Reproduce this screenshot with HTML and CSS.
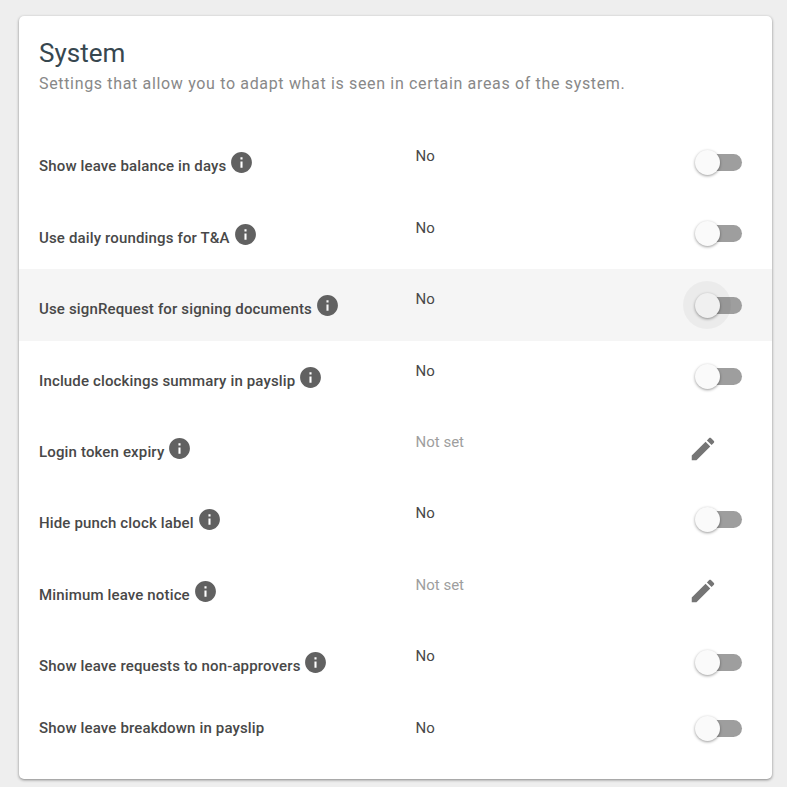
FILE: index.html
```html
<!DOCTYPE html>
<html>
  <head>
    <meta charset="utf-8">
    <title>System settings</title>
    <link rel="stylesheet" href="styles.css">
  </head>
  <body>
    <svg class="sprites" width="0" height="0">
      <symbol id="info" viewBox="0 0 24 24">
        <path d="M12 2C6.48 2 2 6.48 2 12s4.48 10 10 10 10-4.48 10-10S17.52 2 12 2zm1 15h-2v-6h2v6zm0-8h-2V7h2v2z"/>
      </symbol>
      <symbol id="pencil" viewBox="0 0 24 24">
        <path d="M3 17.25V21h3.75L17.81 9.94l-3.75-3.75L3 17.25zM20.71 7.04c.39-.39.39-1.02 0-1.41l-2.34-2.34c-.39-.39-1.02-.39-1.41 0l-1.83 1.83 3.75 3.75 1.83-1.83z"/>
      </symbol>
    </svg>

    <main class="card">
      <h1>System</h1>
      <p class="subtitle">Settings that allow you to adapt what is seen in certain areas of the system.</p>

      <div class="rows">
        <div class="row">
          <div class="label">Show leave balance in days <svg class="info"><use href="#info"/></svg></div>
          <div class="value">No</div>
          <div class="action"><span class="switch"></span></div>
        </div>
        <div class="row">
          <div class="label">Use daily roundings for T&amp;A <svg class="info"><use href="#info"/></svg></div>
          <div class="value">No</div>
          <div class="action"><span class="switch"></span></div>
        </div>
        <div class="row hover">
          <div class="label">Use signRequest for signing documents <svg class="info"><use href="#info"/></svg></div>
          <div class="value">No</div>
          <div class="action"><span class="switch focused"></span></div>
        </div>
        <div class="row">
          <div class="label">Include clockings summary in payslip <svg class="info"><use href="#info"/></svg></div>
          <div class="value">No</div>
          <div class="action"><span class="switch"></span></div>
        </div>
        <div class="row">
          <div class="label">Login token expiry <svg class="info"><use href="#info"/></svg></div>
          <div class="value empty">Not set</div>
          <div class="action"><svg class="edit"><use href="#pencil"/></svg></div>
        </div>
        <div class="row">
          <div class="label">Hide punch clock label <svg class="info"><use href="#info"/></svg></div>
          <div class="value">No</div>
          <div class="action"><span class="switch"></span></div>
        </div>
        <div class="row">
          <div class="label">Minimum leave notice <svg class="info"><use href="#info"/></svg></div>
          <div class="value empty">Not set</div>
          <div class="action"><svg class="edit"><use href="#pencil"/></svg></div>
        </div>
        <div class="row">
          <div class="label">Show leave requests to non-approvers <svg class="info"><use href="#info"/></svg></div>
          <div class="value">No</div>
          <div class="action"><span class="switch"></span></div>
        </div>
        <div class="row last">
          <div class="label">Show leave breakdown in payslip</div>
          <div class="value">No</div>
          <div class="action"><span class="switch"></span></div>
        </div>
      </div>
    </main>
  </body>
</html>
```

FILE: styles.css
```css
body {
  margin: 0;
  height: 787px;
  overflow: hidden;
  background-color: #eeeeee;
  font-family: Roboto, sans-serif;
  color: #424242;
}

.sprites {
  display: block;
}

.card {
  width: 753px;
  height: 763px;
  margin: 16px 0 0 19px;
  padding-top: 22px;
  box-sizing: border-box;
  background-color: white;
  border-radius: 5px;
  box-shadow: 0 1px 3px rgba(0, 0, 0, 0.45);
}

h1 {
  margin: 0 20px;
  font-size: 26px;
  line-height: 31px;
  font-weight: 400;
  color: #37474f;
}

.subtitle {
  margin: 0 20px;
  font-size: 16px;
  line-height: 30px;
  letter-spacing: 0.66px;
  color: #888888;
}

.rows {
  margin-top: 27.4px;
}

.row {
  display: flex;
  height: 71.4px;
  padding: 0 20px;
  box-sizing: border-box;
}

.row.last {
  height: 60px;
}

.hover {
  background-color: #f5f5f5;
}

.label {
  width: 376.5px;
  padding-top: 23px;
  font-size: 15px;
  line-height: 34px;
  font-weight: 500;
  letter-spacing: 0.15px;
  color: #484848;
}

.last .label {
  padding-top: 13px;
}

.info {
  width: 25px;
  height: 25px;
  margin-left: -1px;
  fill: #616161;
  vertical-align: -4px;
}

.value {
  width: 240px;
  padding-top: 19px;
  font-size: 15px;
  line-height: 22px;
  color: #484848;
}

.empty {
  color: #9e9e9e;
}

.last .value {
  padding-top: 19px;
}

.action {
  flex: 1;
  display: flex;
  justify-content: flex-end;
  padding-top: 23.6px;
  position: relative;
}

.last .action {
  padding-top: 18.6px;
}

.switch {
  position: relative;
  display: block;
  width: 36px;
  height: 17px;
  margin-right: 10px;
  margin-top: 4px;
  border-radius: 9px;
  background-color: #9e9e9e;
}

.switch::before {
  content: "";
  position: absolute;
  top: -4px;
  left: -11px;
  width: 25px;
  height: 25px;
  border-radius: 50%;
  background-color: #fafafa;
  box-shadow: 0 1px 3px rgba(0, 0, 0, 0.4);
}

.focused::after {
  content: "";
  position: absolute;
  top: -16px;
  left: -23px;
  width: 48px;
  height: 48px;
  border-radius: 50%;
  background-color: rgba(0, 0, 0, 0.04);
}

.edit {
  width: 30px;
  height: 30px;
  margin-top: -2px;
  margin-right: 34px;
  fill: #757575;
}
```
